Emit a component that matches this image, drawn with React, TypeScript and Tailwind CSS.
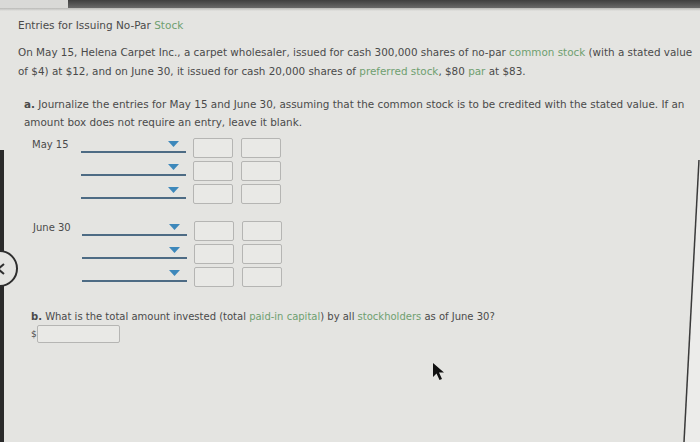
import React from "react";

const G = "text-[#6f9f70]";

function Dropdown() {
  return (
    <div className="relative w-[105px] h-[15px] border-b-2 border-[#4d6b84]">
      <svg className="absolute right-[7px] top-[3px]" width="11" height="6" viewBox="0 0 11 6">
        <polygon points="0,0 11,0 5.5,6" fill="#3d88bb" />
      </svg>
    </div>
  );
}

function Box() {
  return <div className="w-[40px] h-[20px] border border-[#b5b5b3] rounded-[2px] bg-[#e9e9e6]" />;
}

function Row() {
  return (
    <div className="flex items-start h-[23px]">
      <Dropdown />
      <div className="ml-[7px] flex gap-[8px]">
        <Box />
        <Box />
      </div>
    </div>
  );
}

function Block({ label, pl }: { label: string; pl: string }) {
  return (
    <div className={`flex ${pl}`}>
      <div className="w-[49px] leading-[14px]">{label}</div>
      <div className="flex flex-col">
        <Row />
        <Row />
        <Row />
      </div>
    </div>
  );
}

export default function App() {
  return (
    <div
      className="relative w-[700px] h-[442px] overflow-hidden bg-[#e4e4e1] text-[#4a4a4a] text-[10px]"
      style={{ fontFamily: '"DejaVu Sans", Verdana, sans-serif' }}
    >
      {/* top bar */}
      <div className="flex h-[8px]">
        <div className="w-[68px] bg-[#d9d9d7]" />
        <div className="flex-1 bg-gradient-to-b from-[#3f3f3f] to-[#6a6a6a]" />
      </div>
      <div className="h-[3px] bg-gradient-to-b from-[#b9b9b7] to-[#e4e4e1]" />

      <div className="pl-[18px] pr-[6px]">
        <div className="mt-[7px] leading-[14px] text-[10.5px]">
          Entries for Issuing No-Par <span className={G}>Stock</span>
        </div>

        <div className="mt-[11px] leading-[19px] whitespace-nowrap text-[10.4px]">
          <div>
            On May 15, Helena Carpet Inc., a carpet wholesaler, issued for cash 300,000 shares of no-par{" "}
            <span className={G}>common stock</span> (with a stated value
          </div>
          <div>
            of $4) at $12, and on June 30, it issued for cash 20,000 shares of{" "}
            <span className={G}>preferred stock</span>, $80 <span className={G}>par</span> at $83.
          </div>
        </div>

        <div className="mt-[14px] pl-[6px] leading-[18px] whitespace-nowrap text-[10.4px]">
          <div>
            <span className="font-bold">a.</span> Journalize the entries for May 15 and June 30, assuming that the common stock is to be credited with the stated value. If an
          </div>
          <div>amount box does not require an entry, leave it blank.</div>
        </div>
      </div>

      <div className="mt-[7px]">
        <Block label="May 15" pl="pl-[32px]" />
        <div className="h-[14px]" />
        <Block label="June 30" pl="pl-[33px]" />
      </div>

      <div className="mt-[20px] pl-[31px] leading-[14px]">
        <div>
          <span className="font-bold">b.</span> What is the total amount invested (total{" "}
          <span className={G}>paid-in capital</span>) by all <span className={G}>stockholders</span> as of June 30?
        </div>
        <div className="mt-[1px] flex items-center">
          <span className="text-[9px] w-[6px]">$</span>
          <div className="w-[83px] h-[18px] border border-[#b5b5b3] rounded-[2px] bg-[#e9e9e6]" />
        </div>
      </div>

      {/* photo artefacts: left bezel, back button, right edge, cursor */}
      <div className="absolute left-0 top-[150px] w-[4px] h-[292px] bg-[#2a2a2a]" />
      <div className="absolute left-[-19px] top-[250px] w-[37px] h-[37px] rounded-full border-2 border-[#2e2e2e] bg-[#e4e4e1] flex items-center justify-end pr-[11px]">
        <svg width="8" height="12" viewBox="0 0 8 12">
          <polyline points="7,1 1,6 7,11" fill="none" stroke="#2e2e2e" strokeWidth="2" />
        </svg>
      </div>
      <svg className="absolute left-0 top-0" width="700" height="442">
        <polygon points="699,160 700,160 700,442 684,442" fill="#ececea" />
        <line x1="699" y1="160" x2="684" y2="442" stroke="#3a3a3a" strokeWidth="1.5" />
      </svg>
      <svg className="absolute left-[432px] top-[362px]" width="14" height="19" viewBox="0 0 14 19">
        <polygon points="1,1 1,15 4.5,11.5 7.5,18 10,17 7,10.5 12,10.5" fill="#111" />
      </svg>
    </div>
  );
}
